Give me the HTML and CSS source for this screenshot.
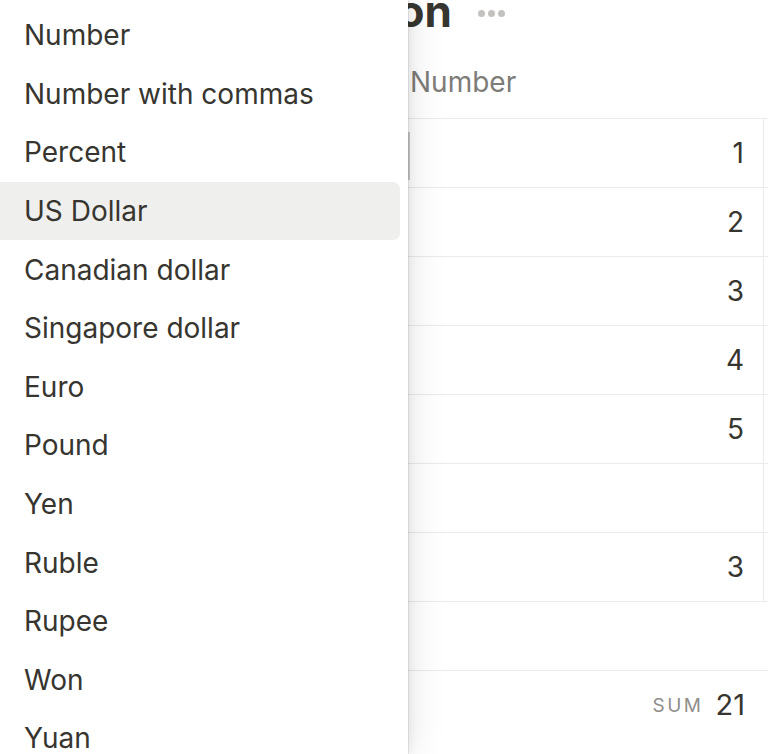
FILE: index.html
```html
<!DOCTYPE html>
<html lang="en">
<head>
<meta charset="utf-8">
<title>Number format</title>
<link rel="stylesheet" href="styles.css">
</head>
<body>
<div class="page">
  <main class="main">
    <div class="title-row">
      <h1 class="title">Calculation</h1>
      <div class="more" aria-label="More">
        <span class="dot"></span><span class="dot"></span><span class="dot"></span>
      </div>
    </div>
    <div class="table">
      <div class="row head">
        <div class="cell name"></div>
        <div class="cell num-head">Number</div>
        <div class="cell filler"></div>
      </div>
      <div class="row">
        <div class="cell name"></div>
        <div class="cell num focused">1</div>
        <div class="cell filler"></div>
      </div>
      <div class="row">
        <div class="cell name"></div>
        <div class="cell num">2</div>
        <div class="cell filler"></div>
      </div>
      <div class="row">
        <div class="cell name"></div>
        <div class="cell num">3</div>
        <div class="cell filler"></div>
      </div>
      <div class="row">
        <div class="cell name"></div>
        <div class="cell num">4</div>
        <div class="cell filler"></div>
      </div>
      <div class="row">
        <div class="cell name"></div>
        <div class="cell num">5</div>
        <div class="cell filler"></div>
      </div>
      <div class="row">
        <div class="cell name"></div>
        <div class="cell num"></div>
        <div class="cell filler"></div>
      </div>
      <div class="row">
        <div class="cell name"></div>
        <div class="cell num">3</div>
        <div class="cell filler"></div>
      </div>
      <div class="row new-row"></div>
      <div class="sum-row">
        <div class="sum-cell"><span class="sum-label">SUM</span><span class="sum-value">21</span></div>
      </div>
    </div>
  </main>

  <nav class="menu">
    <div class="item">Number</div>
    <div class="item">Number with commas</div>
    <div class="item">Percent</div>
    <div class="item active">US Dollar</div>
    <div class="item">Canadian dollar</div>
    <div class="item">Singapore dollar</div>
    <div class="item">Euro</div>
    <div class="item">Pound</div>
    <div class="item">Yen</div>
    <div class="item">Ruble</div>
    <div class="item">Rupee</div>
    <div class="item">Won</div>
    <div class="item">Yuan</div>
  </nav>
</div>
</body>
</html>
```

FILE: styles.css
```css
* { box-sizing: border-box; }

html, body {
  margin: 0;
  padding: 0;
  background: #ffffff;
}

body {
  width: 768px;
  height: 754px;
  overflow: hidden;
  font-family: Inter, "Liberation Sans", Arial, sans-serif;
  color: #37352f;
}

.page {
  position: relative;
  width: 768px;
  height: 754px;
  overflow: hidden;
}

/* ---------- main content ---------- */
.main {
  display: flex;
  flex-direction: column;
  width: 800px;
}

.title-row {
  display: flex;
  align-items: flex-start;
  height: 46px;
}

.title {
  width: 452px;
  margin: -11px 0 0 0;
  font-size: 44px;
  line-height: 44px;
  font-weight: 700;
  color: #37352f;
  text-align: right;
  white-space: nowrap;
}

.more {
  display: flex;
  gap: 3px;
  margin: 10px 0 0 26px;
}

.dot {
  width: 7px;
  height: 7px;
  border-radius: 50%;
  background: #c3c2bf;
}

.table {
  display: flex;
  flex-direction: column;
}

.row {
  display: flex;
  height: 69px;
  border-bottom: 1px solid #ebebea;
}

.row.head {
  height: 73px;
}

.cell {
  display: flex;
  align-items: center;
  font-size: 28px;
  line-height: 34px;
}

.name {
  width: 398px;
  flex: none;
}

.num-head {
  width: 366px;
  flex: none;
  padding-left: 12px;
  color: #7d7c78;
}

.num {
  position: relative;
  width: 366px;
  flex: none;
  justify-content: flex-end;
  padding-right: 19px;
  border-right: 1px solid #ebebea;
  color: #37352f;
}

.num.focused::before {
  content: "";
  position: absolute;
  left: 10px;
  top: 13px;
  width: 2px;
  height: 48px;
  background: #c9c9c7;
}

.filler {
  flex: 1;
}

.sum-row {
  display: flex;
  height: 68px;
}

.sum-cell {
  width: 764px;
  display: flex;
  justify-content: flex-end;
  align-items: center;
  gap: 12px;
  padding-right: 19px;
}

.sum-label {
  font-size: 19px;
  letter-spacing: 2.5px;
  color: #8f8e8a;
}

.sum-value {
  font-size: 29px;
  line-height: 34px;
  color: #37352f;
}

/* ---------- dropdown menu (overlay) ---------- */
.menu {
  position: absolute;
  left: 0;
  top: 0;
  width: 408px;
  height: 754px;
  padding-top: 6px;
  background: #ffffff;
  display: flex;
  flex-direction: column;
  box-shadow: 1px 0 0 rgba(15, 15, 15, 0.08),
              3px 0 8px rgba(15, 15, 15, 0.05),
              6px 0 32px rgba(15, 15, 15, 0.09);
  z-index: 2;
}

.item {
  height: 58.6px;
  flex: none;
  display: flex;
  align-items: center;
  padding-left: 24px;
  margin-right: 8px;
  font-size: 28px;
  line-height: 34px;
  color: #37352f;
  white-space: nowrap;
}

.item.active {
  background: #efefee;
  border-radius: 0 7px 7px 0;
}
```
